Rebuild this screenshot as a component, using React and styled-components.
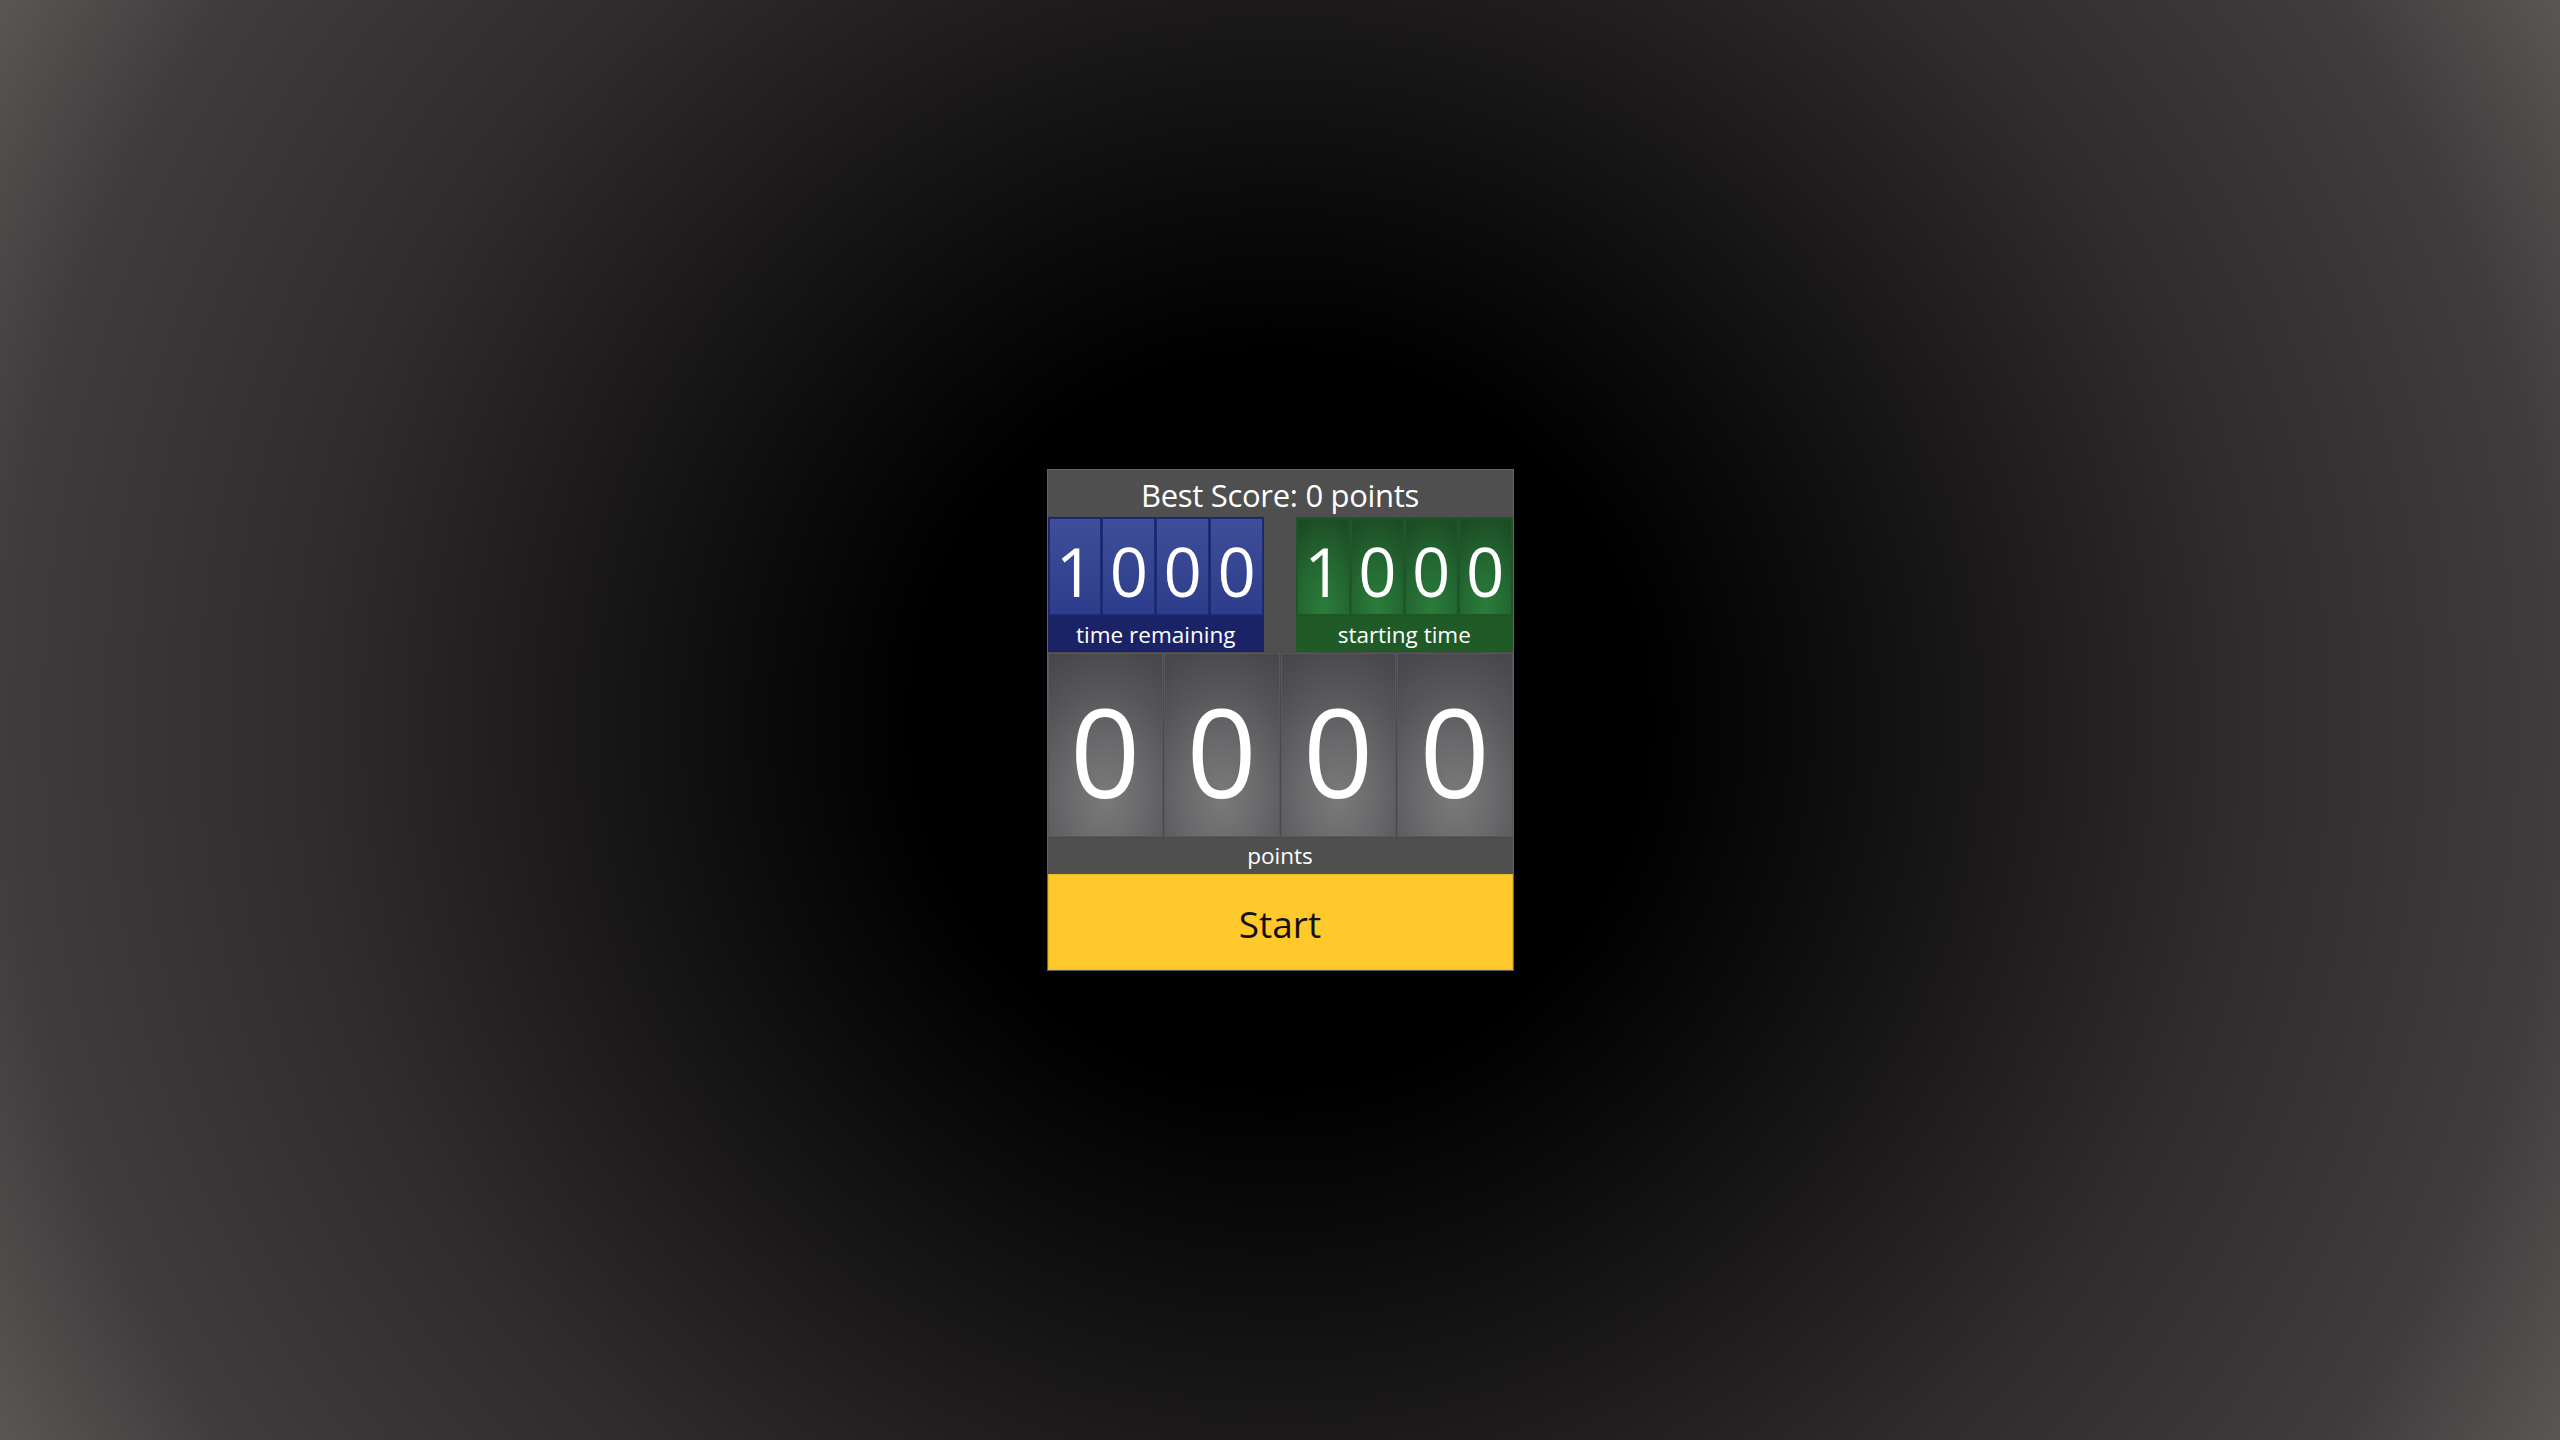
import React from "react";
import styled, { createGlobalStyle } from "styled-components";

const Global = createGlobalStyle`
  html, body { margin: 0; padding: 0; height: 100%; }
  body {
    font-family: "Open Sans", "Noto Sans", sans-serif;
    background: #000;
  }
  #root { height: 100%; }
`;

const Page = styled.div`
  width: 2560px;
  height: 1440px;
  display: flex;
  align-items: center;
  justify-content: center;
  background: radial-gradient(
    circle farthest-corner at 50% 50%,
    #000 0%,
    #000 25%,
    #1b1919 49%,
    #2e2c2c 66%,
    #3e3c3c 87%,
    #5a5656 100%
  );
`;

const Card = styled.div`
  width: 467px;
  box-sizing: border-box;
  border: 1px solid #626262;
  background: #4f4f4f;
  display: flex;
  flex-direction: column;
  color: #fff;
`;

const Header = styled.div`
  height: 47px;
  display: flex;
  align-items: center;
  justify-content: center;
  font-size: 31px;
  letter-spacing: -0.3px;
  line-height: 1;
  padding-top: 3px;
  box-sizing: border-box;
`;

const TimerRow = styled.div`
  display: grid;
  grid-template-columns: 1fr 1fr;
  column-gap: 32px;
`;

const themes = {
  blue: {
    bg: "#1b2568",
    border: "#1f2b75",
    tile: "linear-gradient(180deg, #3f4e9a 0%, #2d3d8b 100%)",
    label: "#1a2366",
  },
  green: {
    bg: "#1e5526",
    border: "#1e5827",
    tile: "radial-gradient(ellipse 90% 100% at 50% 95%, #2b7d3b 0%, #236631 55%, #1d4b25 100%)",
    label: "#1f5a27",
  },
};

const Panel = styled.div`
  display: flex;
  flex-direction: column;
  background: ${(p) => themes[p.$tone].bg};
`;

const TimerTiles = styled.div`
  height: 99px;
  display: grid;
  grid-template-columns: repeat(4, 1fr);
  gap: 1px;
  padding: 1px;
  box-sizing: border-box;
  background: ${(p) => themes[p.$tone].bg};
`;

const TimerTile = styled.div`
  display: flex;
  align-items: center;
  justify-content: center;
  border: 1px solid ${(p) => themes[p.$tone].border};
  background: ${(p) => themes[p.$tone].tile};
  font-size: 67px;
  line-height: 1;
  padding-top: 9px;
  box-sizing: border-box;
`;

const Label = styled.div`
  height: 36px;
  display: flex;
  align-items: center;
  justify-content: center;
  font-size: 22.5px;
  line-height: 1;
  padding-top: ${(p) => (p.$tone ? 3 : 1)}px;
  box-sizing: border-box;
  background: ${(p) => (p.$tone ? themes[p.$tone].label : "#4f4f4f")};
`;

const PointTiles = styled.div`
  height: 184px;
  display: grid;
  grid-template-columns: repeat(4, 1fr);
  gap: 1px;
  background: #4a4a4a;
  border-top: 1px solid #4a4a4a;
  border-bottom: 1px solid #4a4a4a;
`;

const PointTile = styled.div`
  display: flex;
  align-items: center;
  justify-content: center;
  border: 1px solid #58585a;
  background: radial-gradient(
    ellipse 95% 85% at 50% 78%,
    #7a7a7b 0%,
    #6a6a6c 35%,
    #56565a 70%,
    #48484c 100%
  );
  font-size: 123px;
  line-height: 1;
  padding-top: 10px;
  box-sizing: border-box;
`;

const StartButton = styled.button`
  height: 96px;
  border: 1px solid #eab923;
  background: #ffc92c;
  color: #111;
  font-family: "Open Sans", "Noto Sans", sans-serif;
  font-size: 37px;
  line-height: 1;
  padding: 2px 0 0;
  margin: 0;
  cursor: pointer;
  display: flex;
  align-items: center;
  justify-content: center;
`;

function Timer({ tone, digits, label }) {
  return (
    <Panel $tone={tone}>
      <TimerTiles $tone={tone}>
        {digits.map((d, i) => (
          <TimerTile key={i} $tone={tone}>
            {d}
          </TimerTile>
        ))}
      </TimerTiles>
      <Label $tone={tone}>{label}</Label>
    </Panel>
  );
}

export default function App() {
  return (
    <>
      <Global />
      <Page>
        <Card>
          <Header>Best Score: 0 points</Header>
          <TimerRow>
            <Timer tone="blue" digits={["1", "0", "0", "0"]} label="time remaining" />
            <Timer tone="green" digits={["1", "0", "0", "0"]} label="starting time" />
          </TimerRow>
          <PointTiles>
            {["0", "0", "0", "0"].map((d, i) => (
              <PointTile key={i}>{d}</PointTile>
            ))}
          </PointTiles>
          <Label>points</Label>
          <StartButton>Start</StartButton>
        </Card>
      </Page>
    </>
  );
}
